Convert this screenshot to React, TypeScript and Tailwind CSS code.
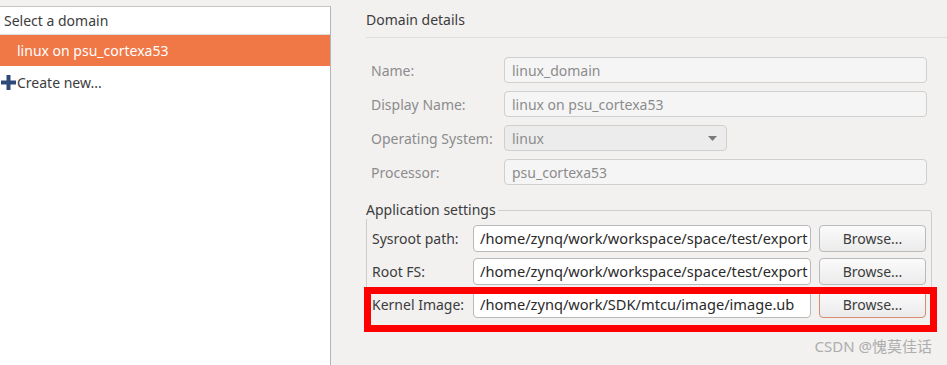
const font = { fontFamily: '"Noto Sans", "Open Sans", sans-serif' };

function ReadOnlyRow({ label, value, select }: { label: string; value: string; select?: boolean }) {
  return (
    <div className="flex items-center h-[26px]">
      <span className="w-[138px] pl-[5px] text-[#8c8c8c]">{label}</span>
      {select ? (
        <div className="w-[223px] h-[26px] rounded-[4px] border border-[#cfcfcf] bg-[#ececec] flex items-center justify-between pl-[7px] pr-[9px] text-[#8c8c8c]">
          <span>{value}</span>
          <svg width="9" height="5" viewBox="0 0 9 5"><path d="M0 0h9L4.5 5z" fill="#7a7a7a" /></svg>
        </div>
      ) : (
        <div className="w-[423px] h-[26px] rounded-[4px] border border-[#cfcfcf] bg-[#f5f5f5] flex items-center pl-[7px] text-[#8c8c8c]">
          {value}
        </div>
      )}
    </div>
  );
}

function PathRow({ label, value, focused }: { label: string; value: string; focused?: boolean }) {
  return (
    <div className="flex items-center h-[27px]">
      <span className="w-[106px] pl-[5px] text-[#3c3c3c]">{label}</span>
      <div className="w-[338px] h-[27px] rounded-[4px] border border-[#b9b9b9] bg-white flex items-center pl-[6px] text-[14.6px] text-[#2a2a2a] overflow-hidden whitespace-nowrap">
        {value}
      </div>
      <button
        className={`ml-[8px] w-[107px] h-[27px] rounded-[4px] border text-[#3c3c3c] bg-gradient-to-b from-[#fbfbfb] to-[#ebebeb] ${focused ? 'border-[#d88b6f]' : 'border-[#bababa]'}`}
      >
        Browse...
      </button>
    </div>
  );
}

export default function App() {
  return (
    <div className="w-[947px] h-[365px] bg-[#f2f1f0] flex relative overflow-hidden text-[14px]" style={font}>
      {/* domain list */}
      <div className="w-[331px] pt-[6px] flex flex-col shrink-0">
        <div className="flex-1 bg-white border-t border-r border-[#c4c4c4] border-r-[#b5b5b5] flex flex-col">
          <div className="h-[28px] flex items-center pl-[4px] text-[#3c3c3c] border-b border-[#dcdcdc]">Select a domain</div>
          <div className="h-[31px] flex items-center pl-[17px] bg-[#f07746] text-white">linux on psu_cortexa53</div>
          <div className="h-[32px] flex items-center text-[#3c3c3c]">
            <svg width="17" height="17" viewBox="0 0 17 17">
              <path d="M6.5 1h4v5.5H16v4h-5.5V16h-4v-5.5H1v-4h5.5z" fill="#2f4a78" />
            </svg>
            <span>Create new...</span>
          </div>
        </div>
      </div>

      {/* details */}
      <div className="flex-1 flex flex-col pl-[35px]">
        <div className="h-[37px] pt-[10px] leading-[20px] text-[#3c3c3c]">Domain details</div>
        <div className="h-px bg-[#dedede]" />
        <div className="flex flex-col gap-[8px] pt-[19px]">
          <ReadOnlyRow label="Name:" value="linux_domain" />
          <ReadOnlyRow label="Display Name:" value="linux on psu_cortexa53" />
          <ReadOnlyRow label="Operating System:" value="linux" select />
          <ReadOnlyRow label="Processor:" value="psu_cortexa53" />
        </div>

        <div className="relative mt-[25px] w-[566px] h-[118px] border border-[#cdcdcd] rounded-[3px]">
          <span className="absolute -top-[10px] -left-px pr-[2px] leading-[18px] bg-[#f2f1f0] text-[#3c3c3c]">Application settings</span>
          <div className="flex flex-col gap-[6px] pt-[14px]">
            <PathRow label="Sysroot path:" value="/home/zynq/work/workspace/space/test/export" />
            <PathRow label="Root FS:" value="/home/zynq/work/workspace/space/test/export" />
            <PathRow label="Kernel Image:" value="/home/zynq/work/SDK/mtcu/image/image.ub" focused />
          </div>
        </div>
      </div>

      {/* annotation box */}
      <div className="absolute left-[364px] top-[287px] w-[573px] h-[45px] border-[7px] border-[#ff0000]" />
      <div className="absolute right-[15px] top-[335px] text-[15px] leading-[22px] text-[#adadad]" style={{ fontFamily: '"Noto Sans", "Noto Sans CJK SC", sans-serif' }}>
        CSDN @愧莫佳话
      </div>
    </div>
  );
}
